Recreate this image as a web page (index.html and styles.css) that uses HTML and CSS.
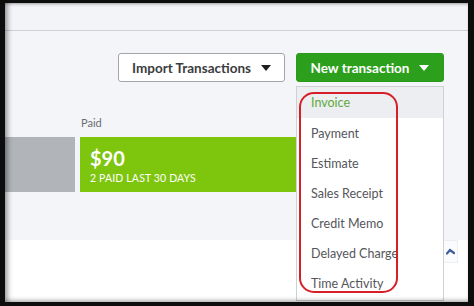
FILE: index.html
```html
<!DOCTYPE html>
<html>
<head>
<meta charset="utf-8">
<link rel="stylesheet" href="styles.css">
</head>
<body>
<div class="frame">
  <div class="screen">
    <div class="topbar"></div>
    <div class="main">
      <div class="actions">
        <button class="btn btn-import">Import Transactions <span class="caret dark"></span></button>
        <button class="btn btn-new">New transaction <span class="caret light"></span></button>
      </div>
      <div class="cards">
        <div class="card-label">Paid</div>
        <div class="bars">
          <div class="bar bar-gray"></div>
          <div class="bar bar-green">
            <div class="amount">$90</div>
            <div class="sub">2 PAID LAST 30 DAYS</div>
          </div>
        </div>
      </div>
    </div>
    <div class="bottom"></div>

    <div class="collapse"><svg width="9" height="7" viewBox="0 0 9 7"><path d="M1 5.5 L4 2 L8 5" fill="none" stroke="#3f5c9c" stroke-width="2.2" stroke-linecap="round"/></svg></div>

    <ul class="menu">
      <li class="item active">Invoice</li>
      <li class="item">Payment</li>
      <li class="item">Estimate</li>
      <li class="item">Sales Receipt</li>
      <li class="item">Credit Memo</li>
      <li class="item">Delayed Charge</li>
      <li class="item">Time Activity</li>
    </ul>
    <div class="annotation"></div>
  </div>
</div>
</body>
</html>
```

FILE: styles.css
```css
* { box-sizing: border-box; }
html, body { margin: 0; padding: 0; }
body { width: 474px; height: 306px; overflow: hidden; background: #0d0d0d; font-family: "Lato", "Open Sans", sans-serif; }

.frame {
  width: 474px;
  height: 306px;
  padding: 3px 6px 4px 5px;
  background: #0d0d0d;
}
.screen {
  position: relative;
  width: 463px;
  height: 299px;
  display: flex;
  flex-direction: column;
  overflow: hidden;
  background: #fff;
}
.screen::after {
  content: "";
  position: absolute;
  inset: 0;
  pointer-events: none;
  box-shadow: inset 5px 0 5px -2px rgba(0,0,0,0.35), inset 0 -4px 4px -2px rgba(0,0,0,0.25), inset 0 3px 3px -2px rgba(0,0,0,0.3);
  z-index: 5;
}
.topbar {
  height: 28px;
  background: #f3f4f8;
  border-bottom: 1px solid #cdd0d4;
  flex: none;
}
.main {
  background: #f4f5f8;
  height: 209px;
  flex: none;
}
.actions {
  display: flex;
  justify-content: flex-end;
  gap: 11px;
  padding: 22px 24px 0 0;
}
.btn {
  height: 29px;
  border-radius: 3px;
  font-family: "Lato", sans-serif;
  font-weight: 700;
  font-size: 13.5px;
  display: flex;
  align-items: center;
  justify-content: center;
  gap: 8px;
  padding: 0;
}
.btn-import {
  width: 167px;
  background: #fff;
  border: 1px solid #a3a5a9;
  color: #3b3c40;
}
.btn-new {
  width: 148px;
  background: #2ca01c;
  border: 1px solid #2a9a1a;
  color: #fff;
}
.caret {
  width: 0; height: 0;
  border-left: 5px solid transparent;
  border-right: 5px solid transparent;
  border-top: 6px solid #1e1e1e;
  margin-left: 2px;
}
.caret.light { border-top-color: #fff; }

.cards { padding-top: 35px; }
.card-label {
  margin-left: 76px;
  font-size: 11px;
  color: #6b6d73;
  height: 20px;
  line-height: 12px;
}
.bars {
  display: flex;
  gap: 5px;
  height: 55px;
}
.bar-gray { width: 70px; background: #b1b5ba; flex: none; }
.bar-green {
  width: 300px;
  background: #7ec50e;
  color: #fff;
  padding: 11px 0 0 10px;
  flex: none;
}
.amount { font-size: 20px; font-weight: 700; line-height: 21px; }
.sub { font-size: 10.5px; line-height: 14px; margin-top: 2px; letter-spacing: 0.15px; }

.bottom { flex: 1; background: #fff; }

.collapse {
  position: absolute;
  left: 430px;
  top: 237px;
  width: 23px;
  height: 23px;
  background: #fafbfc;
  border: 1px solid #eceef1;
  display: flex;
  align-items: center;
  justify-content: center;
  padding-left: 8px;
}

.menu {
  position: absolute;
  left: 291px;
  top: 83px;
  width: 148px;
  height: 215px;
  margin: 0;
  padding: 0;
  list-style: none;
  background: #fff;
  border: 1px solid #cfd1d5;
  z-index: 3;
}
.item {
  height: 30px;
  line-height: 31px;
  padding-left: 14px;
  font-size: 12.5px;
  color: #55565b;
}
.item.active {
  background: #eceef1;
  color: #5fa93c;
  height: 31px;
  line-height: 32px;
}
.annotation {
  position: absolute;
  left: 294px;
  top: 89px;
  width: 99px;
  height: 201px;
  border: 2px solid #d71f27;
  border-radius: 15px;
  z-index: 4;
}
```
